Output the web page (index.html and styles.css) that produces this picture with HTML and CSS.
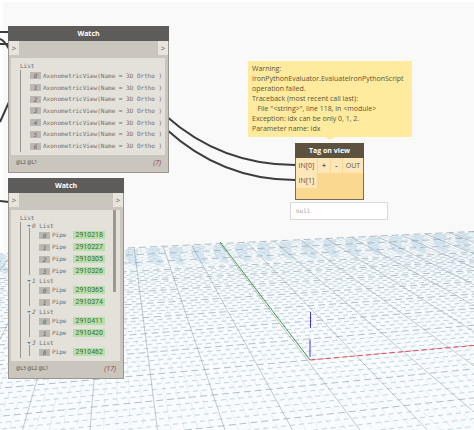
FILE: index.html
```html
<!DOCTYPE html>
<html lang="en">
<head>
<meta charset="utf-8">
<title>Graph workspace</title>
<link rel="stylesheet" href="styles.css">
</head>
<body>
<main class="workspace">
  <svg class="scene" aria-hidden="true">
    <g id="grid"></g>
    <path class="axis-y" d="M220 242 310 360"/>
    <path class="axis-x" d="M310 360 474 345.500"/>
    <path class="axis-z" d="M310.500 312V328M310 339.500V357"/>
    <g class="wires">
      <path d="M166 116C202 148 245 165 295 165"/>
      <path d="M166 129C202 162 245 180 295 180"/>
      <path d="M0 32H9M0 39C4 40 6 44 9 49M0 44 9 44M0 122 9 102M0 201 9 202"/>
    </g>
  </svg>

  <section class="node watch-views">
    <h2 class="node-title">Watch</h2>
    <div class="ports"><button class="port">&gt;</button><button class="port">&gt;</button></div>
    <div class="viewer">
      <div class="root">List</div>
      <ol class="views">
        <li><span class="index">0</span>AxonometricView(Name = 3D Ortho )</li>
        <li><span class="index">1</span>AxonometricView(Name = 3D Ortho )</li>
        <li><span class="index">2</span>AxonometricView(Name = 3D Ortho )</li>
        <li><span class="index">3</span>AxonometricView(Name = 3D Ortho )</li>
        <li><span class="index">4</span>AxonometricView(Name = 3D Ortho )</li>
        <li><span class="index">5</span>AxonometricView(Name = 3D Ortho )</li>
        <li><span class="index">6</span>AxonometricView(Name = 3D Ortho )</li>
      </ol>
    </div>
    <footer class="node-footer"><span>@L2 @L1</span><span class="count">(7)</span></footer>
  </section>

  <section class="node watch-pipes">
    <h2 class="node-title">Watch</h2>
    <div class="ports"><button class="port">&gt;</button><button class="port">&gt;</button></div>
    <div class="viewer">
      <div class="root">List</div>
      <div class="groups">
        <div class="group"><div class="branch"><i>0</i> List</div>
          <ol class="pipes">
            <li><span class="index">0</span>Pipe<a class="id" href="#">2910218</a></li>
            <li><span class="index">1</span>Pipe<a class="id" href="#">2910227</a></li>
            <li><span class="index">2</span>Pipe<a class="id" href="#">2910305</a></li>
            <li><span class="index">3</span>Pipe<a class="id" href="#">2910326</a></li>
          </ol></div>
        <div class="group"><div class="branch"><i>1</i> List</div>
          <ol class="pipes">
            <li><span class="index">0</span>Pipe<a class="id" href="#">2910365</a></li>
            <li><span class="index">1</span>Pipe<a class="id" href="#">2910374</a></li>
          </ol></div>
        <div class="group"><div class="branch"><i>2</i> List</div>
          <ol class="pipes">
            <li><span class="index">0</span>Pipe<a class="id" href="#">2910411</a></li>
            <li><span class="index">1</span>Pipe<a class="id" href="#">2910420</a></li>
          </ol></div>
        <div class="group"><div class="branch"><i>3</i> List</div>
          <ol class="pipes">
            <li><span class="index">0</span>Pipe<a class="id" href="#">2910462</a></li>
          </ol></div>
      </div>
      <div class="scrollbar"></div>
    </div>
    <footer class="node-footer"><span>@L3 @L2 @L1</span><span class="count">(17)</span></footer>
  </section>

  <div class="warning" role="alert">Warning:
IronPythonEvaluator.EvaluateIronPythonScript
operation failed.
Traceback (most recent call last):
   File "&lt;string&gt;", line 118, in &lt;module&gt;
Exception: idx can be only 0, 1, 2.
Parameter name: idx</div>

  <section class="node tag-node">
    <h2 class="node-title">Tag on view</h2>
    <div class="script-ports">
      <button class="input">IN[0]</button>
      <button class="step">+</button>
      <button class="step">-</button>
      <button class="output">OUT</button>
      <button class="input">IN[1]</button>
    </div>
  </section>
  <output class="preview">null</output>
</main>
<script src="grid.js"></script>
</body>
</html>
```
FILE: styles.css
```css
* { box-sizing: border-box; }
body {
  margin: 0;
  font-family: "Open Sans", sans-serif;
  color: #55534f;
}
.workspace {
  position: relative;
  min-height: 100vh;
  overflow: hidden;
  background: #f9f9f9;
  box-shadow: inset 3px 2px #fff;
}
.scene {
  position: absolute;
  inset: 0;
  width: 100%;
  height: 100%;
  fill: none;
}
.floor { fill: #f9fcfe; }
.haze { fill: #c9dfec; opacity: .6; }
.ring { stroke: #f9fcfe; stroke-width: 3; opacity: .8; }
.minor-row { stroke: #9fb8c8; stroke-width: 1; stroke-dasharray: 5 4; opacity: .6; }
.major-row { stroke: #8b9ba6; stroke-width: 1; stroke-dasharray: 7 4; opacity: .65; }
.minor-col { stroke: #b4c8d4; stroke-width: 1; stroke-dasharray: 7 3; opacity: .3; }
.major-col { stroke: #8c989f; stroke-width: 1; opacity: .5; }
.axis-y { stroke: #439745; stroke-width: 1; }
.axis-x { stroke: #e44b51; stroke-width: 1; stroke-dasharray: 5 3; }
.axis-z { stroke: #4238d0; stroke-width: 1; }
.wires { stroke: #3b3c3e; stroke-width: 2; }

button {
  margin: 0;
  border: 0;
  padding: 0;
  font: inherit;
  color: inherit;
}
ol { margin: 0; padding: 0; list-style: none; }

.node {
  position: absolute;
  display: flex;
  flex-direction: column;
  border: 1px solid #99958f;
  background: #cbc6bd;
}
.node-title {
  margin: -1px -1px 0;
  background: #5e5c5a;
  color: #fff;
  text-align: center;
  font-size: 7px;
  line-height: 15px;
}
.watch-views { left: 8px; top: 26px; width: 161px; }
.watch-pipes { left: 8px; top: 178px; width: 116px; }
.ports { display: flex; justify-content: space-between; }
.port {
  width: 10px;
  height: 14px;
  background: #e7e3dd;
  font-size: 8px;
  line-height: 14px;
}
.viewer {
  position: relative;
  margin: 3px 3px 0 2px;
  padding: 4px 0 0 9px;
  background: #e4e0da;
  font: 6px/8px "DejaVu Sans Mono", monospace;
  color: #73706b;
  white-space: nowrap;
}
.views {
  display: grid;
  grid-auto-rows: 1fr;
  height: 82px;
  border-left: 1px solid #96928c;
  padding-left: 9px;
}
.views li, .pipes li { display: flex; align-items: center; }
.index {
  width: 11px;
  height: 7px;
  margin-right: 2px;
  background: #bab7b2;
  color: #65625e;
  font-style: italic;
  line-height: 7px;
  text-align: center;
}
.watch-views .viewer { padding-bottom: 3px; }
.node-footer {
  display: flex;
  justify-content: space-between;
  padding: 0 7px 2px;
  color: #4a4846;
  font-size: 5px;
  line-height: 15px;
}
.count { color: #8d3d43; font-size: 7px; font-style: italic; }

.watch-pipes .viewer { height: 151px; overflow: hidden; }
.groups { border-left: 1px solid #96928c; padding-left: 8px; }
.group { position: relative; }
.group::before {
  content: "";
  position: absolute;
  left: 0;
  top: 6px;
  bottom: 2px;
  border-left: 1px solid #96928c;
}
.branch { padding-left: 3px; height: 7px; line-height: 7px; }
.branch::before {
  content: "";
  position: absolute;
  left: -2px;
  top: 3px;
  border: 2px solid transparent;
  border-top-color: #5985a8;
}
.pipes { padding-left: 10px; }
.pipes li { height: 12px; }
.id {
  margin-left: 7px;
  padding: 0 2px;
  background: #b6dfa9;
  color: #3f6b3d;
  font: 7px/8px Roboto, sans-serif;
  text-decoration: none;
}
.scrollbar {
  position: absolute;
  right: 4px;
  top: 0;
  width: 3px;
  height: 82px;
  background: #9c9893;
}

.warning {
  position: absolute;
  left: 248px;
  top: 61px;
  width: 164px;
  padding: 3px 4px;
  background: #ffeb9d;
  color: #5b5337;
  font-size: 7px;
  line-height: 10px;
  white-space: pre;
}
.warning::after {
  content: "";
  position: absolute;
  left: 77px;
  top: 100%;
  border: 5px solid transparent;
  border-top: 3px solid #ffeb9d;
  border-bottom: 0;
}
.tag-node {
  left: 295px;
  top: 143px;
  width: 69px;
  min-height: 57px;
  border-color: #7b6d52;
  background: #fbd88f;
}
.tag-node .node-title { background: #5c523f; }
.script-ports {
  display: grid;
  grid-template-columns: 21px 12px 11px 1fr;
  grid-auto-rows: 15px;
  column-gap: 1px;
  font-size: 7px;
  line-height: 14px;
}
.script-ports button { background: #fde6b7; }
.script-ports .step { font-weight: 700; }
.preview {
  position: absolute;
  left: 290px;
  top: 202px;
  width: 98px;
  padding: 0 5px;
  border: 1px solid #d9dada;
  background: #fff;
  color: #9a9a9a;
  font: 6px/16px "DejaVu Sans Mono", monospace;
}
```
FILE: grid.js
```js
// Ground grid in two-point perspective, with five minor cells per major cell.
const grid = document.getElementById('grid');
const horizon = 106;
const rowVanish = 3100;
const colVanish = 116;

function add(cls, d) {
  const path = document.createElementNS('http://www.w3.org/2000/svg', 'path');
  path.setAttribute('class', cls);
  path.setAttribute('d', d);
  grid.appendChild(path);
  return path;
}

// Height of row k at a given x; rows converge on the right vanishing point.
function rowY(k, x) {
  const depth = 1 / (0.003788 + 0.000343 * k);
  return horizon + depth * (rowVanish - x) / (rowVanish - 200);
}

const right = 1600;
add('floor', `M0 ${rowY(10, 0)}L${right} ${rowY(10, right)}V1400H0Z`);

for (let x = -6; x < right; x += 22) {
  const y = rowY(10, x);
  add('haze', `M${x} ${y + 1}h13q-5 8 6 17l-9 1q-14-7-10-18Z`);
  add('ring', `M${x + 15} ${y + 1}q-7 11 7 21`);
}

for (let i = -30; i <= 50; i++) {
  const k = i / 5;
  const path = add(i % 5 ? 'minor-row' : 'major-row',
    `M0 ${rowY(k, 0)}L${right} ${rowY(k, right)}`);
  path.setAttribute('stroke-dashoffset', ((i + 30) * 5) % 9);
  if (k > 7 && i % 5) path.style.opacity = 0.3;
}

for (let i = -60; i <= 240; i++) {
  const foot = 360 + i * 13.5;
  const slope = (foot - colVanish) / (430 - horizon);
  // Intersection of this column with the far edge of the floor.
  const m = (rowY(10, 1000) - rowY(10, 0)) / 1000;
  const y = (rowY(10, 0) + m * (colVanish - slope * horizon)) / (1 - m * slope);
  const x = colVanish + slope * (y - horizon);
  if (y < horizon || y > 430) continue;
  add(i % 5 ? 'minor-col' : 'major-col',
    `M${x} ${y}L${colVanish + slope * 1200} ${horizon + 1200}`);
}
```
